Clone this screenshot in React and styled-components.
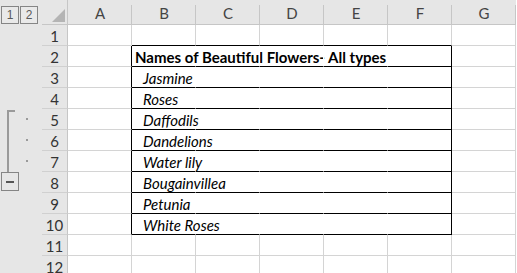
import React from "react";
import styled, { createGlobalStyle } from "styled-components";

const GRID = "#d4d4d4";
const HEAD_BG = "#e6e6e6";
const HEAD_LINE = "#c6c6c6";

const COLS = ["A", "B", "C", "D", "E", "F", "G"];
const ROWS = [1, 2, 3, 4, 5, 6, 7, 8, 9, 10, 11, 12];

const flowers = {
  2: "Names of Beautiful Flowers- All types",
  3: "Jasmine",
  4: "Roses",
  5: "Daffodils",
  6: "Dandelions",
  7: "Water lily",
  8: "Bougainvillea",
  9: "Petunia",
  10: "White Roses",
};

const GlobalStyle = createGlobalStyle`
  html, body {
    margin: 0;
    padding: 0;
    background: #ffffff;
    overflow: hidden;
  }
  body {
    font-family: Lato, "Liberation Sans", sans-serif;
  }
`;

const Sheet = styled.div`
  display: grid;
  grid-template-columns: 42px 26px repeat(7, 64px);
  grid-template-rows: 25px repeat(12, 21px);
  width: 517px;
  height: 273px;
  overflow: hidden;
  background: #ffffff;
  font-family: Lato, "Liberation Sans", sans-serif;
`;

/* ---------- outline gutter ---------- */

const Gutter = styled.div`
  background: ${HEAD_BG};
  display: flex;
  align-items: ${(p) => (p.$top ? "flex-start" : "stretch")};
  padding-top: ${(p) => (p.$top ? "6px" : "0")};
  box-sizing: border-box;
`;

const LevelButton = styled.div`
  width: 18px;
  height: 18px;
  margin-left: 1px;
  border: 1px solid #858585;
  box-sizing: border-box;
  display: flex;
  align-items: center;
  justify-content: center;
  font-family: "Liberation Sans", Arial, sans-serif;
  font-size: 12px;
  color: #5a5a5a;
  background: #e9e9e9;
`;

const Bracket = styled.div`
  width: 6px;
  margin-left: 7px;
  margin-top: ${(p) => (p.$start ? "1px" : "0")};
  border-left: 2px solid #9a9a9a;
  border-top: ${(p) => (p.$start ? "2px solid #9a9a9a" : "none")};
`;

const Dot = styled.div`
  width: 2px;
  height: 2px;
  background: #9a9a9a;
  margin-left: 11px;
  align-self: center;
  margin-top: -1px;
`;

const CollapseButton = styled.div`
  width: 18px;
  height: 19px;
  margin-left: 1px;
  border: 1px solid #858585;
  box-sizing: border-box;
  display: flex;
  align-items: center;
  justify-content: center;

  &::before {
    content: "";
    width: 8px;
    height: 2px;
    background: #555555;
  }
`;

/* ---------- headers ---------- */

const Corner = styled.div`
  background: ${HEAD_BG};
  border-bottom: 1px solid ${HEAD_LINE};
  border-right: 1px solid ${HEAD_LINE};
  box-sizing: border-box;
  display: flex;
  align-items: flex-end;
  justify-content: flex-end;
  padding: 0 2px 2px 0;
`;

const ColHead = styled.div`
  background: linear-gradient(${HEAD_LINE}, ${HEAD_LINE}) right bottom / 1px 19px no-repeat,
    ${HEAD_BG};
  border-bottom: 1px solid ${HEAD_LINE};
  box-sizing: border-box;
  display: flex;
  align-items: center;
  justify-content: center;
  font-size: 15px;
  color: #444444;
  padding-top: 1px;
`;

const RowHead = styled.div`
  background: ${HEAD_BG};
  border-bottom: 1px solid #d0d0d0;
  border-right: 1px solid ${HEAD_LINE};
  box-sizing: border-box;
  display: flex;
  align-items: center;
  justify-content: center;
  font-size: 15px;
  color: #333333;
  padding-top: 1px;
`;

/* ---------- cells ---------- */

const Cell = styled.div`
  border-right: 1px solid ${(p) => p.$right};
  border-bottom: 1px solid ${(p) => p.$bottom};
  box-sizing: border-box;
  display: flex;
  align-items: center;
  min-width: 0;
`;

const CellText = styled.span`
  white-space: nowrap;
  font-size: 15px;
  color: #000000;
  font-weight: ${(p) => (p.$title ? 700 : 400)};
  font-style: ${(p) => (p.$title ? "normal" : "italic")};
  padding-left: ${(p) => (p.$title ? "3px" : "11px")};
  padding-top: 2px;
`;

const CornerMark = () => (
  <svg width="13" height="13" viewBox="0 0 13 13">
    <polygon points="13,0 13,13 0,13" fill="#b4b4b4" />
  </svg>
);

const gutterFor = (r) => {
  if (r >= 5 && r <= 7) {
    return (
      <Gutter key={`g${r}`}>
        <Bracket $start={r === 5} />
        <Dot />
      </Gutter>
    );
  }
  if (r === 8) {
    return (
      <Gutter key={`g${r}`}>
        <CollapseButton />
      </Gutter>
    );
  }
  return <Gutter key={`g${r}`} />;
};

const borderColors = (r, c) => {
  const inBox = c >= 1 && c <= 5;
  const tableRow = r >= 2 && r <= 10;
  let bottom = GRID;
  let right = GRID;
  if (inBox && r >= 1 && r <= 10) bottom = "#000000";
  if (tableRow) {
    if (c === 0 || c === 5) right = "#000000";
    else if (inBox) right = "#ffffff";
  }
  return { bottom, right };
};

const App = () => {
  return (
    <>
      <GlobalStyle />
      <Sheet>
        <Gutter $top>
          <LevelButton>1</LevelButton>
          <LevelButton>2</LevelButton>
        </Gutter>
        <Corner>
          <CornerMark />
        </Corner>
        {COLS.map((c) => (
          <ColHead key={c}>{c}</ColHead>
        ))}

        {ROWS.map((r) => (
          <React.Fragment key={r}>
            {gutterFor(r)}
            <RowHead>{r}</RowHead>
            {COLS.map((col, ci) => {
              const { bottom, right } = borderColors(r, ci);
              const text = ci === 1 ? flowers[r] : null;
              return (
                <Cell key={col} $right={right} $bottom={bottom}>
                  {text && <CellText $title={r === 2}>{text}</CellText>}
                </Cell>
              );
            })}
          </React.Fragment>
        ))}
      </Sheet>
    </>
  );
};

export default App;
